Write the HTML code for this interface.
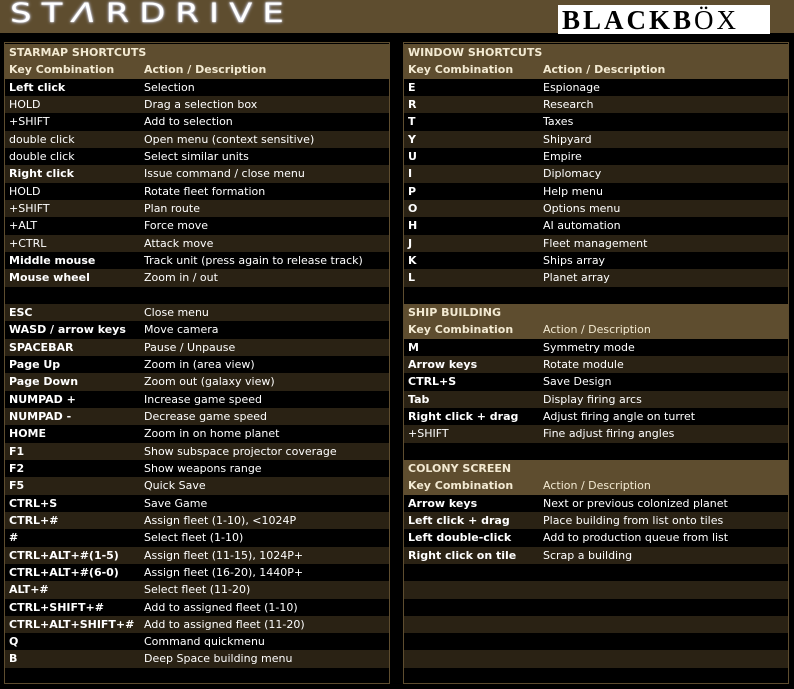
<!DOCTYPE html>
<html><head><meta charset="utf-8"><style>
*{margin:0;padding:0;box-sizing:border-box}
body{width:794px;height:689px;background:#000;position:relative;overflow:hidden;font-family:"DejaVu Sans","Liberation Sans",sans-serif;font-size:11px;color:#fff}
#hdr{position:absolute;left:0;top:0;width:794px;height:33px;background:#5e4d2f}
#logo{position:absolute;left:10px;top:-2px;font-family:"DejaVu Sans",sans-serif;font-size:34px;letter-spacing:10px;color:#fff;text-shadow:0 0 4px #cfd8ff,0 0 2px #fff;transform:scaleY(0.78);transform-origin:top left;white-space:nowrap}
#bb{position:absolute;left:558px;top:5px;width:212px;height:29px;background:#fff;color:#000;font-family:"Liberation Serif",serif;font-weight:bold;font-size:27px;letter-spacing:3px;padding-left:4px;line-height:30px;white-space:nowrap}
.panel{position:absolute;top:42px;height:642px;border:1px solid #5e4d2f;background:#000;overflow:hidden;padding-top:1px}
.r{height:17.33px;line-height:17.33px;white-space:nowrap;position:relative}
.r span{position:absolute;top:0}
.k{left:4px}.a{left:139px}
.b{font-weight:bold}
.bk{background:#000}.br{background:#2a2214}.ol{background:#5e4d2f;color:#f3ead2}
</style></head><body>
<div id="hdr"></div>
<div id="logo">ST<span style="font-style:italic">Λ</span>RDRIVE</div>
<div id="bb">BLACKB<span style="font-weight:normal">ÖX</span></div>
<div class="panel" style="left:4px;width:386px" id="L"></div>
<div class="panel" style="left:403px;width:386px" id="R"></div>
<script>
function build(el,items,total){
 let h='',alt=0;
 for(const it of items){
  if(it.t){h+=`<div class="r ol b"><span class="k">${it.t}</span></div>`;alt=0;continue;}
  if(it.h){h+=`<div class="r ol"><span class="k b">Key Combination</span><span class="a${it.hb?' b':''}">Action / Description</span></div>`;alt=0;continue;}
  const c=alt%2?'br':'bk';alt++;
  h+=`<div class="r ${c}"><span class="k${it[2]?' b':''}">${it[0]}</span><span class="a">${it[1]}</span></div>`;
 }
 let n=items.length;
 while(n<total){const c=alt%2?'br':'bk';alt++;h+=`<div class="r ${c}"></div>`;n++;}
 el.innerHTML=h;
}
const L=[{t:'STARMAP SHORTCUTS'},{h:1,hb:1},
['Left click','Selection',1],['HOLD','Drag a selection box'],['+SHIFT','Add to selection'],['double click','Open menu (context sensitive)'],['double click','Select similar units'],['Right click','Issue command / close menu',1],['HOLD','Rotate fleet formation'],['+SHIFT','Plan route'],['+ALT','Force move'],['+CTRL','Attack move'],['Middle mouse','Track unit (press again to release track)',1],['Mouse wheel','Zoom in / out',1],['',''],
['ESC','Close menu',1],['WASD / arrow keys','Move camera',1],['SPACEBAR','Pause / Unpause',1],['Page Up','Zoom in (area view)',1],['Page Down','Zoom out (galaxy view)',1],['NUMPAD +','Increase game speed',1],['NUMPAD -','Decrease game speed',1],['HOME','Zoom in on home planet',1],['F1','Show subspace projector coverage',1],['F2','Show weapons range',1],['F5','Quick Save',1],['CTRL+S','Save Game',1],['CTRL+#','Assign fleet (1-10), &lt;1024P',1],['#','Select fleet (1-10)',1],['CTRL+ALT+#(1-5)','Assign fleet (11-15), 1024P+',1],['CTRL+ALT+#(6-0)','Assign fleet (16-20), 1440P+',1],['ALT+#','Select fleet (11-20)',1],['CTRL+SHIFT+#','Add to assigned fleet (1-10)',1],['CTRL+ALT+SHIFT+#','Add to assigned fleet (11-20)',1],['Q','Command quickmenu',1],['B','Deep Space building menu',1]];
const R=[{t:'WINDOW SHORTCUTS'},{h:1,hb:1},
['E','Espionage',1],['R','Research',1],['T','Taxes',1],['Y','Shipyard',1],['U','Empire',1],['I','Diplomacy',1],['P','Help menu',1],['O','Options menu',1],['H','AI automation',1],['J','Fleet management',1],['K','Ships array',1],['L','Planet array',1],['',''],
{t:'SHIP BUILDING'},{h:1},
['M','Symmetry mode',1],['Arrow keys','Rotate module',1],['CTRL+S','Save Design',1],['Tab','Display firing arcs',1],['Right click + drag','Adjust firing angle on turret',1],['+SHIFT','Fine adjust firing angles'],['',''],
{t:'COLONY SCREEN'},{h:1},
['Arrow keys','Next or previous colonized planet',1],['Left click + drag','Place building from list onto tiles',1],['Left double-click','Add to production queue from list',1],['Right click on tile','Scrap a building',1]];
build(document.getElementById('L'),L,37);
build(document.getElementById('R'),R,37);
</script>
</body></html>
